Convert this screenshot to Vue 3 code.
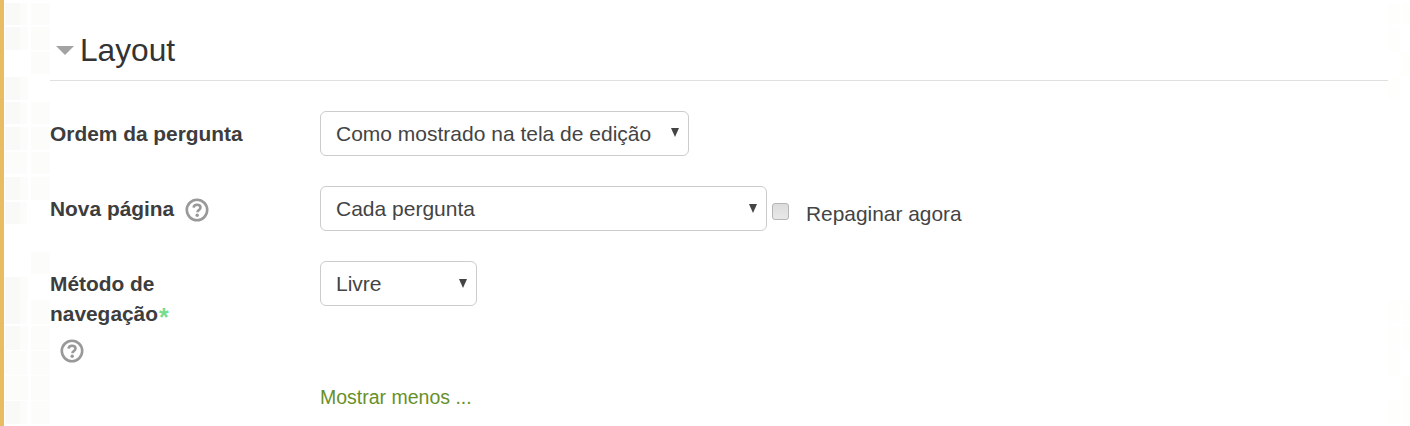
<script setup>
const left = [
  [5, 3, 15, 22, 1], [20, 3, 7, 22, 0], [31, 3, 19, 22, 0],
  [5, 27, 15, 23, 1], [20, 27, 8, 23, 0], [31, 27, 19, 23, 0],
  [31, 52, 19, 22, 0],
  [5, 77, 15, 23, 1], [20, 77, 8, 23, 0],
  [5, 102, 15, 22, 1], [20, 102, 7, 22, 0], [31, 102, 19, 22, 0],
  [5, 127, 15, 23, 1], [20, 127, 8, 23, 0], [31, 127, 19, 23, 0],
  [5, 152, 15, 22, 0], [20, 152, 7, 22, 0], [31, 152, 19, 22, 0],
  [5, 177, 15, 23, 1], [20, 177, 8, 23, 0], [31, 177, 19, 23, 0],
  [5, 202, 15, 22, 1], [20, 202, 7, 22, 0],
  [31, 252, 19, 22, 0],
  [5, 277, 15, 23, 1], [20, 277, 8, 23, 0],
  [5, 300, 15, 24, 1], [20, 300, 7, 24, 0], [31, 300, 19, 24, 0],
  [5, 326, 15, 24, 1], [20, 326, 8, 24, 0], [31, 326, 19, 24, 0],
  [5, 351, 15, 24, 0], [20, 351, 7, 24, 0], [31, 351, 19, 24, 0],
  [5, 376, 15, 24, 0], [20, 376, 8, 24, 0], [31, 376, 19, 24, 0],
  [5, 401, 15, 23, 1], [20, 401, 7, 23, 0], [31, 401, 19, 23, 0],
]
const right = [
  [1388, 3, 12, 22], [1402, 3, 8, 22],
  [1388, 28, 12, 23], [1402, 53, 8, 23],
  [1388, 78, 12, 22],
  [1388, 300, 12, 24], [1402, 300, 8, 24],
  [1388, 326, 12, 24], [1402, 326, 8, 24],
  [1388, 351, 12, 24], [1402, 376, 8, 24],
  [1388, 401, 12, 23], [1402, 401, 8, 23],
]
</script>

<template>
  <div class="page">
    <svg class="pattern" width="1410" height="426" aria-hidden="true">
      <rect v-for="(t, i) in left" :key="i" :x="t[0]" :y="t[1]" :width="t[2]" :height="t[3]" :fill="t[4] ? '#f9faf7' : '#fcfcfb'" />
      <rect v-for="(t, i) in right" :key="'r' + i" :x="t[0]" :y="t[1]" :width="t[2]" :height="t[3]" fill="#fefefd" />
    </svg>
    <main class="panel">
      <h3 class="legend">
        <svg class="caret" width="18" height="9" viewBox="0 0 18 9" aria-hidden="true"><path d="M0 0H18L9 9Z" fill="#a3a3a3" /></svg>
        <span>Layout</span>
      </h3>

      <section class="row first">
        <div class="label"><b>Ordem da pergunta</b></div>
        <div class="field">
          <div class="select w1"><span>Como mostrado na tela de edição</span><i class="arrow up"></i></div>
        </div>
      </section>

      <section class="row second">
        <div class="label">
          <b>Nova página</b>
          <svg class="help" width="24" height="24" viewBox="0 0 24 24" aria-hidden="true">
            <circle cx="12" cy="12" r="10.2" fill="none" stroke="#999" stroke-width="2.6" />
            <path d="M8.6 9.6C8.8 7.6 10.2 6.7 12 6.7c2 0 3.5 1.1 3.5 2.9 0 1.5-1 2.1-2 2.8-.7.5-1 .9-1 1.9" fill="none" stroke="#999" stroke-width="2.6" />
            <circle cx="12.2" cy="17.3" r="1.7" fill="#999" />
          </svg>
        </div>
        <div class="field">
          <div class="select w2"><span>Cada pergunta</span><i class="arrow"></i></div>
          <span class="check"></span>
          <span class="repag">Repaginar agora</span>
        </div>
      </section>

      <section class="row third">
        <div class="label tall">
          <b>Método de navegação</b><span class="req">*</span>
          <svg class="help block" width="24" height="24" viewBox="0 0 24 24" aria-hidden="true">
            <circle cx="12" cy="12" r="10.2" fill="none" stroke="#999" stroke-width="2.6" />
            <path d="M8.6 9.6C8.8 7.6 10.2 6.7 12 6.7c2 0 3.5 1.1 3.5 2.9 0 1.5-1 2.1-2 2.8-.7.5-1 .9-1 1.9" fill="none" stroke="#999" stroke-width="2.6" />
            <circle cx="12.2" cy="17.3" r="1.7" fill="#999" />
          </svg>
        </div>
        <div class="field">
          <div class="select w3"><span>Livre</span><i class="arrow"></i></div>
        </div>
      </section>

      <div class="more"><a>Mostrar menos ...</a></div>
    </main>
  </div>
</template>

<style>
html, body { margin: 0; background: #fff; }
</style>

<style scoped>
.page {
  position: relative;
  box-sizing: border-box;
  width: 1410px;
  height: 426px;
  overflow: hidden;
  border-left: 4px solid #e8bd62;
  padding-left: 46px;
  padding-right: 22px;
  font-family: "Liberation Sans", Arial, sans-serif;
  color: #3d3d3d;
}
.pattern { position: absolute; left: -4px; top: 0; }
.panel { position: relative; }
.legend {
  margin: 0;
  height: 81px;
  box-sizing: border-box;
  border-bottom: 1px solid #e0e0e0;
  display: flex;
  align-items: center;
  gap: 6px;
  padding: 20px 0 0 6px;
  font-weight: 400;
  font-size: 31.7px;
  line-height: 36px;
  color: #333;
}
.row { display: flex; }
.first { margin-top: 30px; height: 75px; }
.second { height: 75px; }
.third { height: 124px; }
.label {
  width: 270px;
  flex: none;
  font-size: 20.9px;
  line-height: 30px;
  padding-top: 8px;
  box-sizing: border-box;
}
.tall { width: 135px; margin-right: 135px; }
.req {
  color: #78dc8e;
  font-weight: 700;
  font-size: 25px;
  line-height: 0;
  margin-left: 1px;
  vertical-align: -5px;
}
.help { vertical-align: -6px; margin-left: 6px; }
.second .help { margin-left: 11px; }
.help.block { display: block; margin: 10px 0 0 10px; }
.field { display: flex; align-items: flex-start; }
.select {
  position: relative;
  box-sizing: border-box;
  height: 45px;
  border: 1px solid #ccc;
  border-radius: 6px;
  padding: 0 15px;
  font-size: 21px;
  line-height: 44px;
  color: #444;
  background: #fff;
}
.w1 { width: 369px; }
.w2 { width: 447px; }
.w3 { width: 157px; }
.arrow {
  position: absolute;
  right: 9px;
  top: 17px;
  border-left: 4.5px solid transparent;
  border-right: 4.5px solid transparent;
  border-top: 9px solid #444;
}
.arrow.up { top: 16px; }
.check {
  box-sizing: border-box;
  width: 17px;
  height: 17px;
  margin: 17px 0 0 5px;
  border: 1px solid #b5b5b5;
  border-radius: 3px;
  background: linear-gradient(#dcdcdc, #e8e8e8);
}
.repag { font-size: 20.9px; margin: 17px 0 0 17px; line-height: 22px; color: #444; }
.more { padding-left: 270px; font-size: 19.5px; line-height: 24px; color: #67902a; }
</style>
